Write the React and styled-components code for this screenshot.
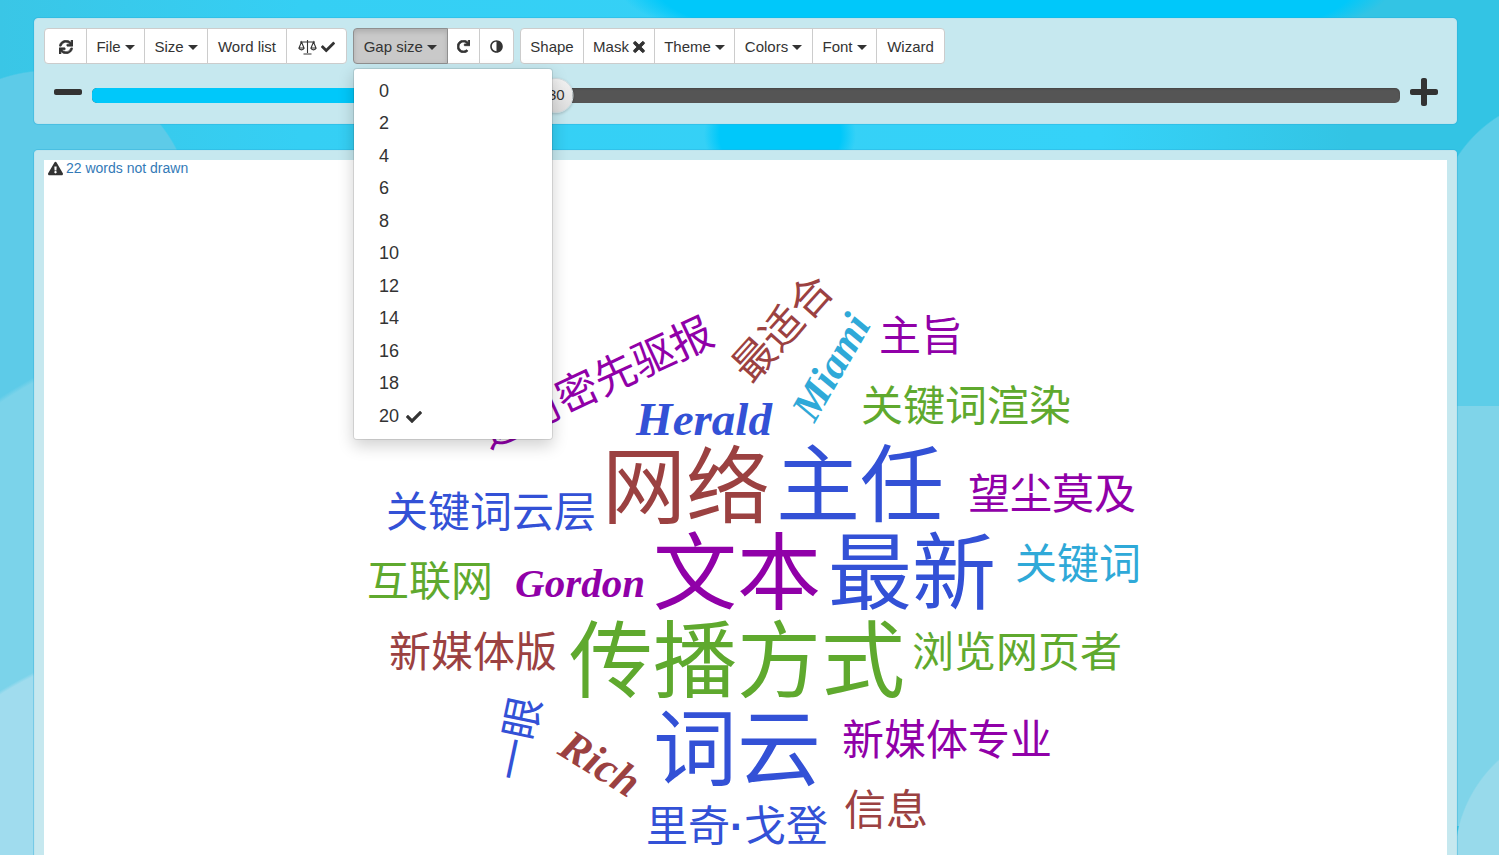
import React from "react";
import styled, { createGlobalStyle } from "styled-components";
import { FaSync, FaCheck, FaRedo, FaAdjust, FaTimes, FaPlus, FaMinus, FaExclamationTriangle } from "react-icons/fa";

const Global = createGlobalStyle`
  html, body { margin: 0; height: 100%; overflow: hidden; }
  body {
    font-family: "Liberation Sans", Arial, sans-serif;
    font-size: 14px;
    line-height: 1.42857;
    color: #333;
    background-color: #33c8e8;
    background-repeat: no-repeat;
    background-image:
      radial-gradient(circle 136px at 1590px 860px, #98daeb 0 99%, transparent 100%),
      linear-gradient(#7fd4e9, #7fd4e9),
      linear-gradient(#5dcde8, #5dcde8),
      radial-gradient(circle 135px at 1570px 230px, #5dcde8 0 99%, transparent 100%),
      radial-gradient(circle 364px at 192px 1000px, #a0dcee 0 99%, transparent 100%),
      radial-gradient(circle 482px at 265px 800px, #7bd3ea 0 99%, transparent 100%),
      linear-gradient(#5dcbe8, #5dcbe8),
      radial-gradient(circle 145px at 48px 215px, #5dcbe8 0 99%, transparent 100%),
      radial-gradient(ellipse 385px 70px at 1005px -10px, #00c8fa 0 90%, transparent 100%),
      radial-gradient(ellipse 76px 55px at 780px 135px, #00c8fa 0 80%, transparent 100%),
      linear-gradient(to right, #3ac6e6 0, #35cff4 300px, #35d2f8 1100px, #33c4e4 1350px);
    background-size:
      auto, 60px 420px, 60px 200px, auto, auto, auto, 60px 300px, auto, auto, auto, auto;
    background-position:
      0 0, right 0 top 406px, right 0 top 230px, 0 0, 0 0, 0 0, 0 200px, 0 0, 0 0, 0 0, 0 0;
  }
`;

const Page = styled.div`
  height: 100vh;
  box-sizing: border-box;
  padding: 18px 42px 0 34px;
  display: flex;
  flex-direction: column;
  gap: 26px;
  overflow: hidden;
`;

const Panel = styled.section`
  box-sizing: border-box;
  background: #c6e8ef;
  border: 1px solid #bfe4ed;
  border-radius: 4px;
  padding: 9px;
  box-shadow: 0 0 0 1px rgba(40, 170, 215, 0.35);
`;

const ControlPanel = styled(Panel)`
  height: 106px;
  flex: none;
`;

const CloudPanel = styled(Panel)`
  flex: 1;
  padding-bottom: 0;
  min-height: 0;
  border-bottom: 0;
  border-radius: 4px 4px 0 0;
`;

const Toolbar = styled.div`
  display: flex;
  gap: 6px;
  height: 36px;
`;

const Group = styled.div`
  position: relative;
  display: flex;
`;

const Button = styled.button`
  box-sizing: border-box;
  height: 36px;
  margin: 0 0 0 -1px;
  padding: 1px 0 0;
  width: ${(p) => p.$w}px;
  flex: none;
  display: flex;
  align-items: center;
  justify-content: center;
  gap: 4px;
  font: 15px/21px "Liberation Sans", Arial, sans-serif;
  color: #333;
  white-space: nowrap;
  background: ${(p) => (p.$active ? "#c9c9c9" : "#fff")};
  border: 1px solid ${(p) => (p.$active ? "#8f8f8f" : "#ccc")};
  box-shadow: ${(p) => (p.$active ? "inset 0 3px 5px rgba(0,0,0,.125)" : "none")};
  position: relative;
  z-index: ${(p) => (p.$active ? 1 : 0)};
  &:first-child { margin-left: 0; border-radius: 4px 0 0 4px; }
  &:last-of-type { border-radius: 0 4px 4px 0; }
  svg { display: block; flex: none; }
`;

const Caret = styled.span`
  display: inline-block;
  width: 0;
  height: 0;
  margin-top: 2px;
  border-top: 5px solid #333;
  border-left: 5px solid transparent;
  border-right: 5px solid transparent;
`;

const SyncIcon = styled(FaSync)`
  stroke: currentColor;
  stroke-width: 24;
`;

const RedoIcon = styled(FaRedo)`
  stroke: currentColor;
  stroke-width: 30;
`;

const TimesIcon = styled(FaTimes)`
  margin: 0 -2px;
  stroke: currentColor;
  stroke-width: 30;
`;

const AdjustIcon = styled(FaAdjust)`
  transform: scaleX(-1);
`;

const Menu = styled.ul`
  position: absolute;
  z-index: 10;
  top: 40px;
  left: 0;
  box-sizing: border-box;
  width: 200px;
  margin: 0;
  padding: 6.5px 0 6px;
  list-style: none;
  background: #fff;
  border: 1px solid rgba(0, 0, 0, 0.1);
  border-radius: 4px;
  box-shadow: 0 6px 16px rgba(0, 0, 0, 0.18);
  background-clip: padding-box;
`;

const MenuItem = styled.li`
  display: flex;
  align-items: center;
  gap: 7px;
  height: 32.5px;
  padding-left: 25px;
  font-size: 18px;
  color: #333;
`;

const SliderRow = styled.div`
  display: flex;
  align-items: flex-start;
  margin-top: 14px;
  padding: 0 9px 0 10px;
  height: 35px;
`;

const SliderIcon = styled.span`
  flex: none;
  display: block;
  width: 28px;
  height: 32px;
  margin-top: -2px;
  color: #333;
  svg { display: block; margin-left: -2px; }
`;

const Track = styled.div`
  position: relative;
  flex: 1;
  height: 15px;
  margin: 10px 10px 0;
  border-radius: 5px;
  background: #555;
  box-shadow: inset 0 1px 2px rgba(0, 0, 0, 0.2);
`;

const Fill = styled.div`
  height: 100%;
  border-radius: 5px 0 0 5px;
  background: #00c8fa;
`;

const Thumb = styled.div`
  position: absolute;
  top: -10px;
  width: 35px;
  height: 35px;
  box-sizing: border-box;
  transform: translateX(-50%);
  border-radius: 50%;
  background: linear-gradient(180deg, #f2f2f2, #ddd);
  border: 1px solid #d2dcdf;
  box-shadow: 0 1px 3px rgba(0, 0, 0, 0.2);
  font-size: 15px;
  line-height: 31px;
  text-align: center;
  color: #333;
`;

const Canvas = styled.div`
  position: relative;
  height: 100%;
  background: #fff;
  overflow: hidden;
`;

const Notice = styled.div`
  display: flex;
  align-items: center;
  gap: 3px;
  padding: 0 0 0 4px;
  height: 16px;
  font-size: 14px;
  line-height: 16px;
  color: #337ab7;
  svg { color: #333; display: block; }
`;

const Word = styled.span.attrs((p) => ({
  style: {
    left: p.$x - 44,
    top: p.$y - 160 - (p.$script ? 0 : p.$size * 0.06),
    fontSize: p.$size,
    transform: `translate(-50%, -50%) rotate(${p.$rot || 0}deg)`,
  },
}))`
  position: absolute;
  line-height: 1;
  white-space: nowrap;
  color: ${(p) => p.$color};
  font-family: ${(p) =>
    p.$script
      ? '"Liberation Serif", "DejaVu Serif", serif'
      : '"Noto Sans CJK SC", sans-serif'};
  font-style: ${(p) => (p.$script ? "italic" : "normal")};
  font-weight: ${(p) => (p.$script ? 700 : 400)};
`;

const NarrowDot = styled.span`
  font-family: "Liberation Sans", sans-serif;
  font-weight: 700;
`;

const BROWN = "#9b4141";
const BLUE = "#3351d6";
const PURPLE = "#9000a8";
const GREEN = "#5fa92e";
const SKY = "#2fa9d8";

const words = [
  ["网络", 686, 486, 84, BROWN],
  ["主任", 860, 484, 84, BLUE],
  ["文本", 737, 572, 84, PURPLE],
  ["最新", 912, 572, 84, BLUE],
  ["传播方式", 737, 660, 84, GREEN],
  ["词云", 737, 748, 84, BLUE],
  ["关键词云层", 491, 512, 42, BLUE],
  ["互联网", 430, 581, 42, GREEN],
  ["新媒体版", 473, 652, 42, BROWN],
  ["望尘莫及", 1052, 494, 42, PURPLE],
  ["关键词", 1078, 564, 42, SKY],
  ["浏览网页者", 1017, 652, 42, GREEN],
  ["新媒体专业", 947, 740, 42, PURPLE],
  ["信息", 886, 810, 42, BROWN],
  [<>里奇<NarrowDot>·</NarrowDot>戈登</>, 737, 828, 42, BLUE],
  ["主旨", 921, 336, 42, PURPLE],
  ["关键词渲染", 966, 406, 42, GREEN],
  ["迈阿密先驱报", 595, 383, 42, PURPLE, -25],
  ["最适合", 780, 329, 42, BROWN, -48],
  ["一眼", 515, 741, 42, BLUE, -78],
  ["Herald", 704, 419, 47, BLUE, 0, true],
  ["Miami", 831, 367, 42, SKY, -60, true],
  ["Gordon", 580, 583, 41, PURPLE, 0, true],
  ["Rich", 600, 764, 44, BROWN, 32, true],
];

const gaps = [0, 2, 4, 6, 8, 10, 12, 14, 16, 18, 20];

function ScaleIcon() {
  return (
    <svg width="19" height="16" viewBox="0 0 19 16" fill="none" stroke="#333" strokeWidth="1.1">
      <path d="M9.5 1v13M5.500 15h8M2 3h15M3.500 3 1 9h5zM15.500 3 13 9h5z" />
      <path d="M1 9c.5 2.500 4.500 2.500 5 0M13 9c.5 2.500 4.500 2.500 5 0" />
    </svg>
  );
}

export default function App() {
  return (
    <>
      <Global />
      <Page>
        <ControlPanel>
          <Toolbar>
            <Group>
              <Button $w={43}><SyncIcon size={14} /></Button>
              <Button $w={59}>File <Caret /></Button>
              <Button $w={64}>Size <Caret /></Button>
              <Button $w={80}>Word list</Button>
              <Button $w={61}><ScaleIcon /><FaCheck size={14} /></Button>
            </Group>
            <Group>
              <Button $w={94.5} $active>Gap size <Caret /></Button>
              <Button $w={33.5}><RedoIcon size={13} /></Button>
              <Button $w={35}><AdjustIcon size={13} /></Button>
              <Menu>
                {gaps.map((g) => (
                  <MenuItem key={g}>
                    {g}
                    {g === 20 && <FaCheck size={16} />}
                  </MenuItem>
                ))}
              </Menu>
            </Group>
            <Group>
              <Button $w={64}>Shape</Button>
              <Button $w={72}>Mask <TimesIcon size={16} /></Button>
              <Button $w={81}>Theme <Caret /></Button>
              <Button $w={79}>Colors <Caret /></Button>
              <Button $w={65}>Font <Caret /></Button>
              <Button $w={69}>Wizard</Button>
            </Group>
          </Toolbar>
          <SliderRow>
            <SliderIcon><FaMinus size={32} /></SliderIcon>
            <Track>
              <Fill style={{ width: "35.5%" }} />
              <Thumb style={{ left: "35.5%" }}>30</Thumb>
            </Track>
            <SliderIcon><FaPlus size={32} /></SliderIcon>
          </SliderRow>
        </ControlPanel>
        <CloudPanel>
          <Canvas>
            <Notice>
              <FaExclamationTriangle size={15} />
              22 words not drawn
            </Notice>
            {words.map(([t, x, y, s, c, r, sc], i) => (
              <Word key={i} $x={x} $y={y} $size={s} $color={c} $rot={r} $script={sc}>
                {t}
              </Word>
            ))}
          </Canvas>
        </CloudPanel>
      </Page>
    </>
  );
}
